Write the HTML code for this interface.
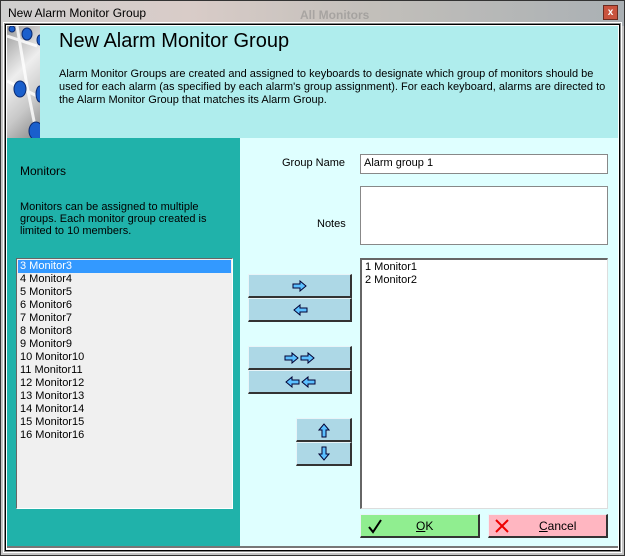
<!DOCTYPE html><html><head><style>
*{margin:0;padding:0;box-sizing:border-box}
body{width:625px;height:556px;overflow:hidden;font-family:"Liberation Sans",sans-serif;font-size:11px;background:#bdbdbd;position:relative}
.a{position:absolute}
.btn{position:absolute;background:#add8e6;border-top:1px solid #e8f4f8;border-left:1px solid #e8f4f8;border-right:2px solid #333;border-bottom:2px solid #333;display:flex;align-items:center;justify-content:center}
.list div{height:13px;line-height:13px;padding-left:2px;font-size:11px}
</style></head><body>
<div class="a" style="left:0;top:0;width:625px;height:556px;border:1px solid #333;background:#c4c4c4"></div>
<div class="a" style="left:1px;top:1px;width:623px;height:25px;background:linear-gradient(90deg,#cfcfcf 0,#d9ccc8 30%,#c2bfba 60%,#aab0b4 100%)"></div>
<div class="a" style="left:8px;top:6px;font-size:12px;color:#000">New Alarm Monitor Group</div>
<div class="a" style="left:300px;top:8px;font-size:12px;color:#777;font-weight:bold;opacity:.4">All Monitors</div>
<div class="a" style="left:603px;top:5px;width:15px;height:15px;background:#c9533e;border:1px solid #6a2a20;color:#fff;font-size:10px;text-align:center;line-height:13px;font-weight:bold">x</div>
<div class="a" style="left:3px;top:22px;width:619px;height:531px;border:1px solid #fff;background:#888"></div>
<div class="a" style="left:5px;top:24px;width:615px;height:527px;background:#000"></div>
<div class="a" style="left:6px;top:25px;width:613px;height:525px;background:#fff"></div>
<div class="a" style="left:7px;top:26px;width:611px;height:521px;background:#dfffff"></div>
<div class="a" style="left:7px;top:546px;width:611px;height:2px;background:#777"></div>
<div class="a" style="left:7px;top:26px;width:611px;height:112px;background:#afeded"></div>
<div class="a" style="left:7px;top:26px;width:33px;height:112px;background:linear-gradient(135deg,#9a9a9a,#eee 40%,#c8c8c8 70%,#888)">
<svg width="33" height="112"><g stroke="#fff" stroke-width="3" fill="none" opacity=".8"><path d="M0 10 L30 20 M10 0 L20 60 L30 110 M0 55 L30 70"/></g>
<g fill="#1a5fcc" stroke="#0a2a70"><ellipse cx="20" cy="8" rx="5" ry="6"/><ellipse cx="5" cy="3" rx="3" ry="3"/><ellipse cx="13" cy="63" rx="6" ry="8"/><ellipse cx="33" cy="68" rx="4" ry="8"/><ellipse cx="29" cy="105" rx="7" ry="9"/><ellipse cx="33" cy="14" rx="3" ry="5"/></g></svg></div>
<div class="a" style="left:59px;top:30px;font-size:20px">New Alarm Monitor Group</div>
<div class="a" style="left:59px;top:68px;width:560px;font-size:11px;line-height:13px">Alarm Monitor Groups are created and assigned to keyboards to designate which group of monitors should be used for each alarm (as specified by each alarm's group assignment). For each keyboard, alarms are directed to the Alarm Monitor Group that matches its Alarm Group.</div>
<div class="a" style="left:7px;top:138px;width:233px;height:408px;background:#20b2aa"></div>
<div class="a" style="left:20px;top:164px;font-size:12px">Monitors</div>
<div class="a" style="left:20px;top:201px;width:210px;line-height:12px">Monitors can be assigned to multiple groups. Each monitor group created is limited to 10 members.</div>
<div class="a list" style="left:16px;top:258px;width:217px;height:251px;background:#f0f0f0;border:1px solid #fff;border-top:1px solid #666;border-left:1px solid #666;padding:1px">
<div style="background:#3399ff;color:#fff">3 Monitor3</div><div>4 Monitor4</div><div>5 Monitor5</div><div>6 Monitor6</div><div>7 Monitor7</div><div>8 Monitor8</div><div>9 Monitor9</div><div>10 Monitor10</div><div>11 Monitor11</div><div>12 Monitor12</div><div>13 Monitor13</div><div>14 Monitor14</div><div>15 Monitor15</div><div>16 Monitor16</div></div>
<div class="a" style="left:282px;top:157px">Group Name</div>
<div class="a" style="left:360px;top:154px;width:248px;height:20px;background:#fff;border:1px solid #888;padding:2px 3px">Alarm group 1</div>
<div class="a" style="left:317px;top:218px">Notes</div>
<div class="a" style="left:360px;top:186px;width:248px;height:59px;background:#fff;border:1px solid #888"></div>
<div class="a list" style="left:360px;top:258px;width:248px;height:251px;background:#fff;border:1px solid #ddd;border-top:2px solid #666;border-left:2px solid #666;padding:1px"><div>1 Monitor1</div><div>2 Monitor2</div></div>
<div class="btn" style="left:248px;top:274px;width:104px;height:24px"><svg width="16" height="12"><path d="M1 4h7V1l6 5-6 5V8H1z" fill="#5bc0ff" stroke="#003"/></svg></div>
<div class="btn" style="left:248px;top:298px;width:104px;height:24px"><svg width="16" height="12"><path d="M15 4H8V1L2 6l6 5V8h7z" fill="#5bc0ff" stroke="#003"/></svg></div>
<div class="btn" style="left:248px;top:346px;width:104px;height:24px"><svg width="32" height="12"><path d="M1 4h7V1l6 5-6 5V8H1zM17 4h7V1l6 5-6 5V8h-7z" fill="#5bc0ff" stroke="#003"/></svg></div>
<div class="btn" style="left:248px;top:370px;width:104px;height:24px"><svg width="32" height="12"><path d="M15 4H8V1L2 6l6 5V8h7zM31 4h-7V1l-6 5 6 5V8h7z" fill="#5bc0ff" stroke="#003"/></svg></div>
<div class="btn" style="left:296px;top:418px;width:56px;height:24px"><svg width="12" height="16"><path d="M4 15V8H1l5-6 5 6H8v7z" fill="#5bc0ff" stroke="#003"/></svg></div>
<div class="btn" style="left:296px;top:442px;width:56px;height:24px"><svg width="12" height="16"><path d="M4 1v7H1l5 6 5-6H8V1z" fill="#5bc0ff" stroke="#003"/></svg></div>
<div class="btn" style="left:360px;top:514px;width:120px;height:24px;background:#90ee90;justify-content:flex-start;font-size:12px"><svg style="margin-left:6px;margin-right:33px" width="16" height="16"><path d="M2 9l4 5L14 2" fill="none" stroke="#000" stroke-width="2"/></svg><span><u>O</u>K</span></div>
<div class="btn" style="left:488px;top:514px;width:120px;height:24px;background:#ffb6c1;justify-content:flex-start;font-size:12px"><svg style="margin-left:6px;margin-right:30px" width="14" height="14"><path d="M1 1l12 12M13 1L1 13" stroke="#e00" stroke-width="2"/></svg><span><u>C</u>ancel</span></div>
</body></html>
